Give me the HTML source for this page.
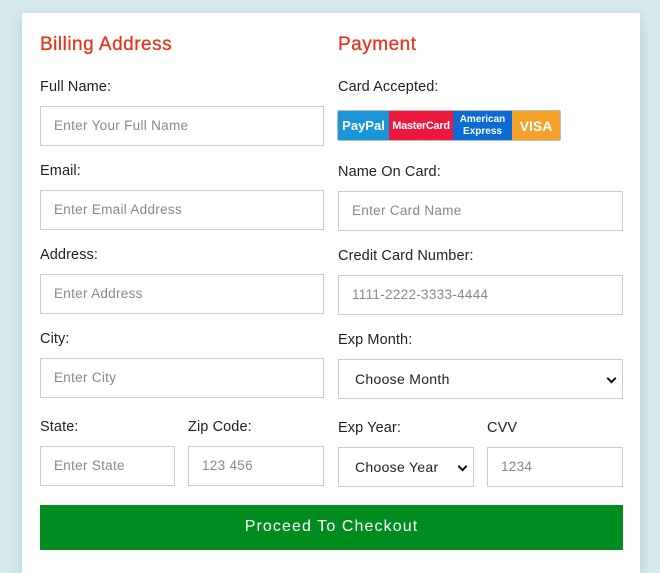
<!DOCTYPE html>
<html><head><meta charset="utf-8"><style>
*{box-sizing:border-box;margin:0;padding:0}
body{width:660px;height:550px;background:#d3e9ec;font-family:"Liberation Sans",sans-serif;position:relative;overflow:hidden}
.card{position:absolute;left:22px;top:13px;width:618px;height:560px;background:#fff;box-shadow:0 4px 12px rgba(0,0,0,.12)}
h3{position:absolute;color:#e8341c;font-size:19px;font-weight:normal;letter-spacing:.5px;-webkit-text-stroke:.3px #e8341c}
.l{position:absolute;font-size:14.5px;color:#222;margin-top:1px;letter-spacing:.1px}
.i{position:absolute;height:40px;border:1px solid #ccc;font-size:13.5px;color:#888;padding-left:13px;line-height:38px;letter-spacing:.3px}
.s{color:#222;font-size:14px;padding-left:16px}
.s:after{content:"";position:absolute;right:7px;top:15px;width:5px;height:5px;border-right:2px solid #111;border-bottom:2px solid #111;transform:rotate(45deg)}
.cards{position:absolute;left:337px;top:110px;height:31px;display:flex;font-weight:bold;color:#fff;border:1px solid #bbb;border-radius:2px;overflow:hidden}
.cards div{display:flex;align-items:center;justify-content:center;text-align:center}
.btn{position:absolute;left:40px;top:505px;width:583px;height:45px;background:#008c1e;color:#fff;font-size:16px;text-align:center;line-height:44px;letter-spacing:1.1px}
</style></head><body>
<div class="card"></div>
<h3 style="left:40px;top:34px">Billing Address</h3>
<h3 style="left:338px;top:34px">Payment</h3>
<div class="l" style="left:40px;top:78px">Full Name:</div>
<div class="i" style="left:40px;top:106px;width:284px">Enter Your Full Name</div>
<div class="l" style="left:40px;top:162px">Email:</div>
<div class="i" style="left:40px;top:190px;width:284px">Enter Email Address</div>
<div class="l" style="left:40px;top:246px">Address:</div>
<div class="i" style="left:40px;top:274px;width:284px">Enter Address</div>
<div class="l" style="left:40px;top:330px">City:</div>
<div class="i" style="left:40px;top:358px;width:284px">Enter City</div>
<div class="l" style="left:40px;top:418px">State:</div>
<div class="i" style="left:40px;top:446px;width:135px">Enter State</div>
<div class="l" style="left:188px;top:418px">Zip Code:</div>
<div class="i" style="left:188px;top:446px;width:136px">123 456</div>

<div class="l" style="left:338px;top:78px">Card Accepted:</div>
<div class="cards">
<div style="width:51px;background:#1a96d8;font-size:13px">PayPal</div>
<div style="width:64px;background:#f0173f;font-size:11px;letter-spacing:-.3px">MasterCard</div>
<div style="width:59px;background:#0a6bd4;font-size:10px;line-height:12px">American<br>Express</div>
<div style="width:48px;background:#f5a22a;font-size:14px">VISA</div>
</div>
<div class="l" style="left:338px;top:163px">Name On Card:</div>
<div class="i" style="left:338px;top:191px;width:285px">Enter Card Name</div>
<div class="l" style="left:338px;top:247px">Credit Card Number:</div>
<div class="i" style="left:338px;top:275px;width:285px">1111-2222-3333-4444</div>
<div class="l" style="left:338px;top:331px">Exp Month:</div>
<div class="i s" style="left:338px;top:359px;width:285px">Choose Month</div>
<div class="l" style="left:338px;top:419px">Exp Year:</div>
<div class="i s" style="left:338px;top:447px;width:136px">Choose Year</div>
<div class="l" style="left:487px;top:419px">CVV</div>
<div class="i" style="left:487px;top:447px;width:136px">1234</div>
<div class="btn">Proceed To Checkout</div>
</body></html>
